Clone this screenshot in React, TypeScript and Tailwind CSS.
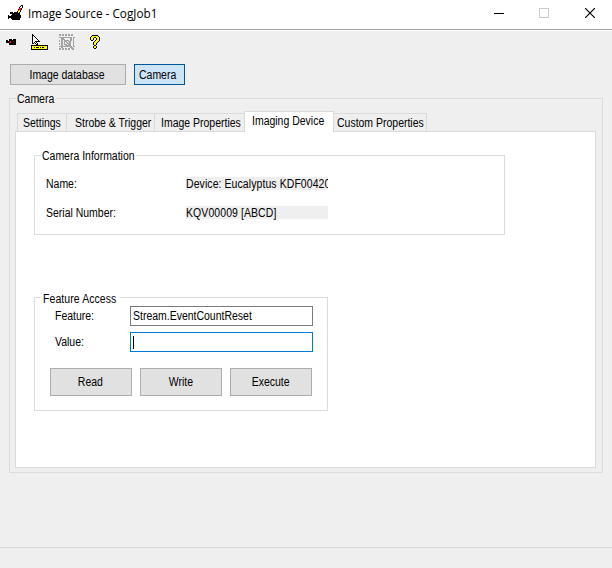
import type { ReactNode } from "react";

const COLORS: Record<string, string> = {
  k: "#000000",
  y: "#ffff00",
  r: "#ff0000",
  d: "#800000",
  w: "#ffffff",
  g: "#a3a3a3",
};

const appIcon = [
  ".............kk",
  "............kwk",
  "...........kwwk",
  "...........rrk.",
  "..........krrk.",
  "..........ryk..",
  ".........kyyk..",
  "..kkk.kkkkyk...",
  "..kkkkkkkkkk...",
  "....kkkkkkkk...",
  "k..kkkkkkkkkk..",
  "kkkkkkkkkkkkk..",
  "kkkkkkkkkkkkk..",
  "k..kkkkkkkkk...",
  "....kkkkkkkk...",
];

const cameraIcon = [
  "...kkk.kkk",
  "kk.kkkkkkk",
  "kkkkrkkdkk",
  "kkkrrkkkkk",
  "...kkkkkkk",
  "...kkkkkkk",
];

const rulerIcon = [
  ".k...............",
  ".kk..............",
  ".kwk.............",
  ".kwwk............",
  ".kwwwk...........",
  ".kwwwwk..........",
  ".kwwwwwk.........",
  ".kwwkkkkk........",
  ".kwkwk...........",
  ".kk.kwk..........",
  ".....kk..........",
  "kkkkkkkkkkkkkkkkk",
  "kyyyyyyyyyyyyyyyk",
  "kyykykkkykykkyyyk",
  "kyyyyyyyyyyyyyyyk",
  "kkkkkkkkkkkkkkkkk",
];

const regionIcon = [
  "gg.gg.gg.gg.gg..",
  "gg.gg.gg.gg.gg..",
  "................",
  "ggggggggggggg.gg",
  "..ggg......gg.g.",
  "..gggg.....gg.g.",
  "g.gg.ggggg.gg.g.",
  "g.gg.ggg.ggg..g.",
  "..gg.g.gg.gg..g.",
  "g.gg.g..gggg..g.",
  "g.gg.ggg.ggg..g.",
  "..gg..gggggg..g.",
  "ggggggggggggg.gg",
  "..gg.......ggg..",
  "gg.gg.gg.gg.ggg.",
  "gg.gg.gg.gg..gg.",
];

const helpIcon = [
  "..kkkkkk..",
  ".kyyyyyyk.",
  "kyyykkyyyk",
  "kyyk..kyyk",
  "kyyk..kyyk",
  ".kk..kyyyk",
  "....kyyyk.",
  "...kyyyk..",
  "...kyyk...",
  "...kyyk...",
  "....kk....",
  "...kyyk...",
  "...kyyk...",
  "....kk....",
];

function PixelIcon({ rows, className }: { rows: string[]; className?: string }) {
  const width = rows[0].length;
  return (
    <svg
      width={width}
      height={rows.length}
      shapeRendering="crispEdges"
      className={`shrink-0 ${className ?? ""}`}
    >
      {rows.flatMap((row, y) =>
        row.split("").map((c, x) =>
          c === "." ? null : (
            <rect key={`${x}-${y}`} x={x} y={y} width={1} height={1} fill={COLORS[c]} />
          ),
        ),
      )}
    </svg>
  );
}

// Narrow UI lettering
function Label({ children, center }: { children: ReactNode; center?: boolean }) {
  return (
    <span
      className={`inline-block whitespace-nowrap scale-x-[0.873] ${
        center ? "origin-center" : "origin-left"
      }`}
    >
      {children}
    </span>
  );
}

function Tab({ label, className }: { label: string; className: string }) {
  return (
    <div
      className={`h-[18px] shrink-0 border-t border-r border-[#dadada] leading-[18px] ${className}`}
    >
      <Label>{label}</Label>
    </div>
  );
}

function InfoRow({ label, value }: { label: string; value: string }) {
  return (
    <div className="flex h-[13px] leading-[14px]">
      <div className="w-[140px]"><Label>{label}</Label></div>
      <div className="w-[142px] overflow-x-clip bg-[#efefef] tracking-[0.1px]">
        <Label>{value}</Label>
      </div>
    </div>
  );
}

function PushButton({ label }: { label: string }) {
  return (
    <button
      className="flex h-7 w-[82px] items-center justify-center border
                 border-[#adadad] bg-[#e1e1e1] pr-px"
    >
      <Label center>{label}</Label>
    </button>
  );
}

export default function App() {
  return (
    <div
      className="flex h-[568px] w-[612px] flex-col overflow-hidden bg-[#efefef]
                 font-['Liberation_Sans',sans-serif] text-[12px] leading-[14px] text-black"
    >
      {/* Title bar */}
      <div className="flex h-[31px] shrink-0 border-b border-white bg-white">
        <div className="flex w-full border-b border-[#a0a0a0]">
          <PixelIcon rows={appIcon} className="mt-[5px] ml-2" />
          <span
            className="mt-[5px] ml-[5px] origin-left scale-x-[0.98] font-['Open_Sans',sans-serif]
                       text-[12px] leading-[17px] whitespace-nowrap"
          >
            Image Source - CogJob1
          </span>
          <div className="mt-2 mr-[17px] ml-auto flex">
            <svg width="10" height="10" shapeRendering="crispEdges" className="mr-[35px]">
              <path d="M0 5.5h10" stroke="#000" />
            </svg>
            <svg width="10" height="10" shapeRendering="crispEdges" className="mr-9">
              <path d="M.5.5h9v9h-9z" fill="none" stroke="#ccc" />
            </svg>
            <svg width="10" height="10">
              <path d="M0 0l10 10M10 0L0 10" stroke="#000" strokeWidth="1.2" />
            </svg>
          </div>
        </div>
      </div>

      {/* Toolbar */}
      <div className="flex h-[33px] shrink-0 items-start">
        <PixelIcon rows={cameraIcon} className="mt-2 ml-[6px]" />
        <PixelIcon rows={rulerIcon} className="mt-[3px] ml-[15px]" />
        <PixelIcon rows={regionIcon} className="mt-[3px] ml-[11px]" />
        <PixelIcon rows={helpIcon} className="mt-1 ml-[15px]" />
      </div>

      {/* Source switch */}
      <div className="ml-[10px] flex h-[21px] shrink-0 gap-2">
        <button className="w-[116px] border border-[#adadad] bg-[#e1e1e1] pr-[2px]">
          <Label center>Image database</Label>
        </button>
        <button className="w-[51px] border border-[#005499] bg-[#cce4f7] pl-1 text-left">
          <Label>Camera</Label>
        </button>
      </div>

      {/* Camera group */}
      <div className="mt-[13px] ml-[9px] h-[375px] w-[594px] shrink-0 border border-[#dcdcdc]">
        <div className="-mt-[7px] ml-[6px] h-[14px] w-10 bg-[#efefef] pl-px">
          <Label>Camera</Label>
        </div>
        <div className="mt-[5px] ml-[7px] flex h-5 items-end">
          <Tab label="Settings" className="w-[50px] border-l pl-[5px]" />
          <Tab label="Strobe & Trigger" className="w-[88px] pl-2" />
          <Tab label="Image Properties" className="w-[89px] border-r-0 pl-[6px]" />
          <div
            className="relative -mb-px h-[21px] w-[90px] shrink-0 border border-b-0
                       border-[#dadada] bg-white pl-[7px] leading-[19px]"
          >
            <Label>Imaging Device</Label>
          </div>
          <Tab label="Custom Properties" className="w-[93px] pl-[3px]" />
        </div>

        <div className="ml-[5px] h-[337px] w-[581px] border border-[#dadada] bg-white pl-[18px]">
          <div className="mt-[23px] h-20 w-[471px] border border-[#dcdcdc]">
            <div className="-mt-[7px] ml-[6px] h-[14px] w-[95px] bg-white pl-px">
              <Label>Camera Information</Label>
            </div>
            <div className="mt-[14px] ml-[11px] flex flex-col gap-4">
              <InfoRow label="Name:" value="Device: Eucalyptus KDF00420" />
              <InfoRow label="Serial Number:" value="KQV00009 [ABCD]" />
            </div>
          </div>

          <div className="mt-[62px] h-[114px] w-[294px] border border-[#dcdcdc]">
            <div className="-mt-[6px] ml-[6px] h-[14px] w-[79px] bg-white pl-[2px] tracking-[0.1px]">
              <Label>Feature Access</Label>
            </div>
            <div className="ml-5 flex flex-col gap-[6px]">
              <div className="flex h-5 items-center">
                <div className="w-[75px]"><Label>Feature:</Label></div>
                <div className="h-5 w-[183px] border border-[#7a7a7a] pl-[2px] leading-[18px]">
                  <Label>Stream.EventCountReset</Label>
                </div>
              </div>
              <div className="flex h-5 items-center">
                <div className="w-[75px]"><Label>Value:</Label></div>
                <div className="flex h-5 w-[183px] items-center border border-[#0078d7] pl-[2px]">
                  <div className="h-[13px] w-px bg-black" />
                </div>
              </div>
            </div>
            <div className="mt-4 ml-[15px] flex gap-2">
              <PushButton label="Read" />
              <PushButton label="Write" />
              <PushButton label="Execute" />
            </div>
          </div>
        </div>
      </div>

      {/* Status bar */}
      <div className="mt-auto h-[21px] shrink-0 border-t border-[#d7d7d7]" />
    </div>
  );
}
